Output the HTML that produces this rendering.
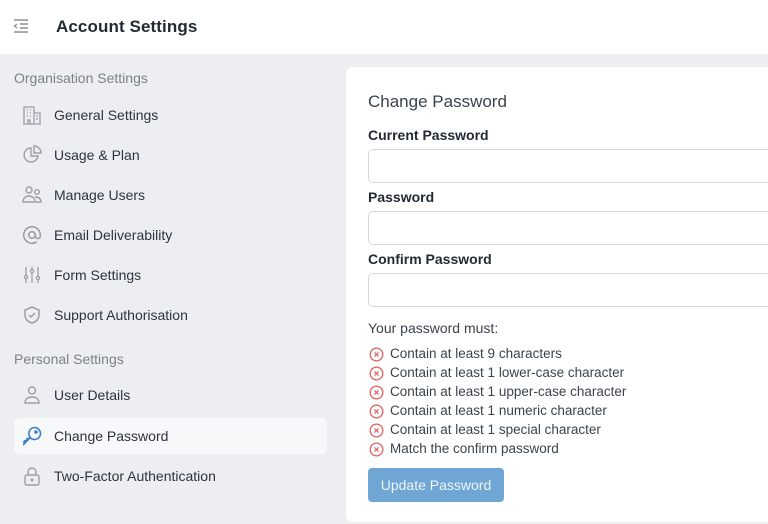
<!DOCTYPE html>
<html><head><meta charset="utf-8"><style>
*{box-sizing:border-box;margin:0;padding:0}
body{width:768px;height:524px;overflow:hidden;background:#eceef1;font-family:"Liberation Sans",sans-serif;color:#2b3440;position:relative}
.hdr{position:absolute;left:0;top:0;width:768px;height:54px;background:#fff}
.hdr h1{position:absolute;left:56px;top:17px;font-size:17px;font-weight:bold;color:#222a33;letter-spacing:0.1px}
.sec{position:absolute;left:14px;font-size:14px;color:#7a828c}
.item{position:absolute;left:14px;width:313px;height:36px;font-size:14px;color:#2b3440;border-radius:6px}
.item span{position:absolute;left:40px;top:10px}
.item svg{position:absolute;left:8px;top:8px}
.act{background:#f7f8f9}
.card{position:absolute;left:346px;top:67px;width:440px;height:455px;background:#fff;border-radius:7px}
.card h2{position:absolute;left:22px;top:25px;font-size:17px;font-weight:normal;color:#3a434d}
.lbl{position:absolute;left:22px;font-size:14px;font-weight:bold;color:#222a33}
.inp{position:absolute;left:22px;width:420px;height:34px;border:1px solid #d3d7dd;border-radius:5px}
.must{position:absolute;left:22px;top:253px;font-size:14px;color:#3a434d}
.rule{position:absolute;left:22px;font-size:13.5px;color:#3a434d;height:19px}
.rule svg{position:absolute;left:1px;top:2px}
.rule span{position:absolute;left:22px;top:1px;white-space:nowrap}
.btn{position:absolute;left:22px;top:401px;width:136px;height:34px;background:#6fa6d3;border-radius:4px;color:#eef5fb;font-size:14px;text-align:center;line-height:34px}
</style></head><body>
<div class="hdr">
<svg style="position:absolute;left:13px;top:19px" width="16" height="14" viewBox="0 0 16 14"><g stroke="#8a9099" stroke-width="1.4"><path d="M1 1h14M7 5h8M7 9h8M1 13h14"/><path d="M4 5L1.5 7L4 9" fill="none"/></g></svg>
<h1>Account Settings</h1></div>
<div class="sec" style="top:70px">Organisation Settings</div>
<div class="item" style="top:97px"><svg width="20" height="20" viewBox="0 0 20 20" fill="none" stroke="#9aa0a8" stroke-width="1.3"><path d="M2 19V2h10v17M12 8h6v11M1 19h18M5 5h1M8 5h1M5 8h1M8 8h1M5 11h1M8 11h1M6 19v-4h2v4M14 11h2M14 14h2"/></svg><span>General Settings</span></div>
<div class="item" style="top:137px"><svg width="20" height="20" viewBox="0 0 20 20" fill="none" stroke="#9aa0a8" stroke-width="1.4"><path d="M9 3a7 7 0 1 0 7 8H9z"/><path d="M12 1v7h7a7 7 0 0 0-7-7z"/></svg><span>Usage &amp; Plan</span></div>
<div class="item" style="top:177px"><svg width="20" height="20" viewBox="0 0 20 20" fill="none" stroke="#9aa0a8" stroke-width="1.4"><circle cx="7" cy="5" r="3"/><circle cx="15" cy="7" r="2.3"/><path d="M1 17c0-4 3-6 6-6s6 2 6 6zM13 12c3 0 6 1 6 5h-5"/></svg><span>Manage Users</span></div>
<div class="item" style="top:217px"><svg width="20" height="20" viewBox="0 0 20 20" fill="none" stroke="#9aa0a8" stroke-width="1.6"><circle cx="10" cy="10" r="3.3"/><path d="M13.3 8v3a2.5 2.5 0 0 0 5 0v-1a8.3 8.3 0 1 0-3.5 6.8"/></svg><span>Email Deliverability</span></div>
<div class="item" style="top:257px"><svg width="20" height="20" viewBox="0 0 20 20" fill="none" stroke="#9aa0a8" stroke-width="1.3"><path d="M4 2v16M10 2v16M16 2v16"/><circle cx="4" cy="12" r="1.6" fill="#eceef1"/><circle cx="10" cy="6" r="1.6" fill="#eceef1"/><circle cx="16" cy="13" r="1.6" fill="#eceef1"/></svg><span>Form Settings</span></div>
<div class="item" style="top:297px"><svg width="20" height="20" viewBox="0 0 20 20" fill="none" stroke="#9aa0a8" stroke-width="1.5"><path d="M10 2l7 3v5c0 4-3 7-7 8-4-1-7-4-7-8V5z"/><path d="M7 10l2 2 4-4"/></svg><span>Support Authorisation</span></div>
<div class="sec" style="top:351px">Personal Settings</div>
<div class="item" style="top:377px"><svg width="20" height="20" viewBox="0 0 20 20" fill="none" stroke="#9aa0a8" stroke-width="1.4"><circle cx="10" cy="5.5" r="3.5"/><path d="M3 18c0-4 3-6 7-6s7 2 7 6z"/></svg><span>User Details</span></div>
<div class="item act" style="top:418px"><svg width="20" height="20" viewBox="0 0 20 20" fill="none" stroke="#3c7fc2" stroke-width="1.6"><path d="M12.5 1.5a6 6 0 1 1-4.3 10.2L2 18v-2.5l1-1h2v-2h2l1.2-1.2A6 6 0 0 1 12.5 1.5z"/><circle cx="14" cy="6" r="1" fill="#3c7fc2"/></svg><span>Change Password</span></div>
<div class="item" style="top:458px"><svg width="20" height="20" viewBox="0 0 20 20" fill="none" stroke="#9aa0a8" stroke-width="1.4"><rect x="3" y="9" width="14" height="10" rx="2"/><path d="M6 9V6a4 4 0 0 1 8 0v3"/><circle cx="10" cy="14" r="0.8" fill="#9aa0a8"/></svg><span>Two-Factor Authentication</span></div>
<div class="card">
<h2>Change Password</h2>
<div class="lbl" style="top:60px">Current Password</div>
<div class="inp" style="top:82px"></div>
<div class="lbl" style="top:122px">Password</div>
<div class="inp" style="top:144px"></div>
<div class="lbl" style="top:184px">Confirm Password</div>
<div class="inp" style="top:206px"></div>
<div class="must">Your password must:</div>
<div class="rule" style="top:278px"><svg width="15" height="15" viewBox="0 0 15 15"><circle cx="7.5" cy="7.5" r="6.3" fill="none" stroke="#e06a6a" stroke-width="1.4"/><path d="M5.5 5.5l4 4M9.5 5.5l-4 4" stroke="#e06a6a" stroke-width="1.3"/></svg><span>Contain at least 9 characters</span></div>
<div class="rule" style="top:297px"><svg width="15" height="15" viewBox="0 0 15 15"><circle cx="7.5" cy="7.5" r="6.3" fill="none" stroke="#e06a6a" stroke-width="1.4"/><path d="M5.5 5.5l4 4M9.5 5.5l-4 4" stroke="#e06a6a" stroke-width="1.3"/></svg><span>Contain at least 1 lower-case character</span></div>
<div class="rule" style="top:316px"><svg width="15" height="15" viewBox="0 0 15 15"><circle cx="7.5" cy="7.5" r="6.3" fill="none" stroke="#e06a6a" stroke-width="1.4"/><path d="M5.5 5.5l4 4M9.5 5.5l-4 4" stroke="#e06a6a" stroke-width="1.3"/></svg><span>Contain at least 1 upper-case character</span></div>
<div class="rule" style="top:335px"><svg width="15" height="15" viewBox="0 0 15 15"><circle cx="7.5" cy="7.5" r="6.3" fill="none" stroke="#e06a6a" stroke-width="1.4"/><path d="M5.5 5.5l4 4M9.5 5.5l-4 4" stroke="#e06a6a" stroke-width="1.3"/></svg><span>Contain at least 1 numeric character</span></div>
<div class="rule" style="top:354px"><svg width="15" height="15" viewBox="0 0 15 15"><circle cx="7.5" cy="7.5" r="6.3" fill="none" stroke="#e06a6a" stroke-width="1.4"/><path d="M5.5 5.5l4 4M9.5 5.5l-4 4" stroke="#e06a6a" stroke-width="1.3"/></svg><span>Contain at least 1 special character</span></div>
<div class="rule" style="top:373px"><svg width="15" height="15" viewBox="0 0 15 15"><circle cx="7.5" cy="7.5" r="6.3" fill="none" stroke="#e06a6a" stroke-width="1.4"/><path d="M5.5 5.5l4 4M9.5 5.5l-4 4" stroke="#e06a6a" stroke-width="1.3"/></svg><span>Match the confirm password</span></div>
<div class="btn">Update Password</div>
</div>
</body></html>
